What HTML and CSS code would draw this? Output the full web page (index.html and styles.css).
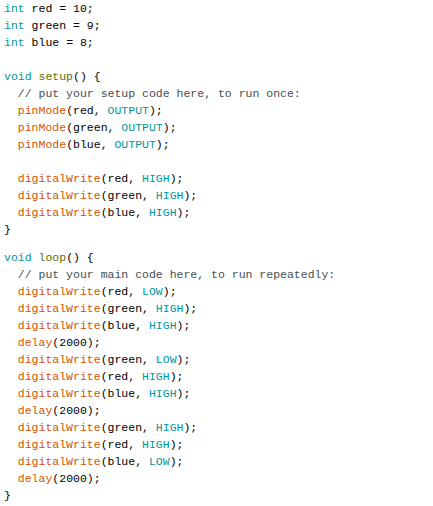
FILE: index.html
```html
<!DOCTYPE html>
<html>
<head>
<meta charset="utf-8">
<link rel="stylesheet" href="styles.css">
</head>
<body>
<div class="code">
<div class="ln"><span class="kw">int</span> red = 10;</div>
<div class="ln"><span class="kw">int</span> green = 9;</div>
<div class="ln"><span class="kw">int</span> blue = 8;</div>
<div class="ln"> </div>
<div class="ln"><span class="kw">void</span> <span class="st">setup</span>() {</div>
<div class="ln">  <span class="cm">// put your setup code here, to run once:</span></div>
<div class="ln">  <span class="fn">pinMode</span>(red, <span class="ct">OUTPUT</span>);</div>
<div class="ln">  <span class="fn">pinMode</span>(green, <span class="ct">OUTPUT</span>);</div>
<div class="ln">  <span class="fn">pinMode</span>(blue, <span class="ct">OUTPUT</span>);</div>
<div class="ln"> </div>
<div class="ln">  <span class="fn">digitalWrite</span>(red, <span class="ct">HIGH</span>);</div>
<div class="ln">  <span class="fn">digitalWrite</span>(green, <span class="ct">HIGH</span>);</div>
<div class="ln">  <span class="fn">digitalWrite</span>(blue, <span class="ct">HIGH</span>);</div>
<div class="ln">}</div>
<div class="gap"></div>
<div class="ln"><span class="kw">void</span> <span class="st">loop</span>() {</div>
<div class="ln">  <span class="cm">// put your main code here, to run repeatedly:</span></div>
<div class="ln">  <span class="fn">digitalWrite</span>(red, <span class="ct">LOW</span>);</div>
<div class="ln">  <span class="fn">digitalWrite</span>(green, <span class="ct">HIGH</span>);</div>
<div class="ln">  <span class="fn">digitalWrite</span>(blue, <span class="ct">HIGH</span>);</div>
<div class="ln">  <span class="fn">delay</span>(2000);</div>
<div class="ln">  <span class="fn">digitalWrite</span>(green, <span class="ct">LOW</span>);</div>
<div class="ln">  <span class="fn">digitalWrite</span>(red, <span class="ct">HIGH</span>);</div>
<div class="ln">  <span class="fn">digitalWrite</span>(blue, <span class="ct">HIGH</span>);</div>
<div class="ln">  <span class="fn">delay</span>(2000);</div>
<div class="ln">  <span class="fn">digitalWrite</span>(green, <span class="ct">HIGH</span>);</div>
<div class="ln">  <span class="fn">digitalWrite</span>(red, <span class="ct">HIGH</span>);</div>
<div class="ln">  <span class="fn">digitalWrite</span>(blue, <span class="ct">LOW</span>);</div>
<div class="ln">  <span class="fn">delay</span>(2000);</div>
<div class="ln">}</div>
</div>
</body>
</html>
```
FILE: styles.css
```css
html, body {
  margin: 0;
  padding: 0;
  background: #ffffff;
}
.code {
  padding: 0 0 0 4px;
  font-family: "Liberation Mono", "Courier New", monospace;
  font-size: 11.5px;
  color: #000000;
}
.ln {
  white-space: pre;
  height: 17px;
  line-height: 17px;
}
.gap {
  height: 11px;
}
.kw { color: #00979c; }
.ct { color: #00979c; }
.st { color: #5e6d03; }
.fn { color: #d35400; }
.cm { color: #434f54; }
```
